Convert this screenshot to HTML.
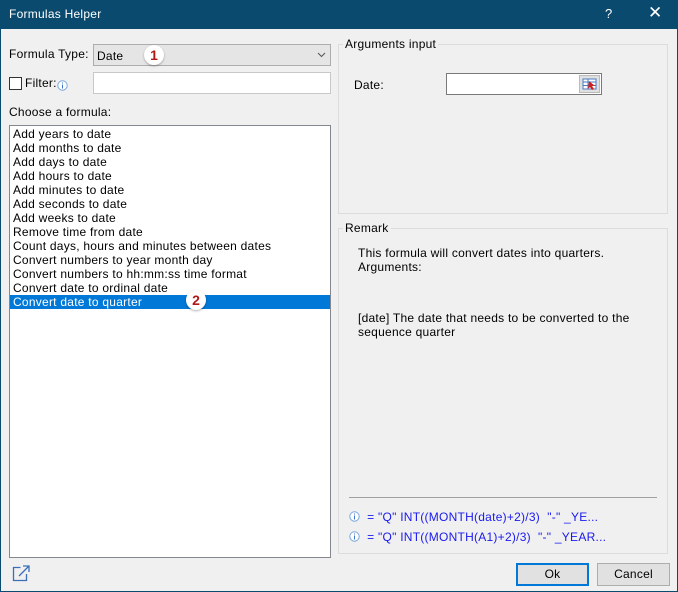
<!DOCTYPE html>
<html><head><meta charset="utf-8"><style>
*{box-sizing:border-box;margin:0;padding:0}
body{width:678px;height:592px;background:#f0f0f0;font-family:"Liberation Sans",sans-serif;font-size:12px;letter-spacing:0.25px;color:#000;position:relative;overflow:hidden}
.win{position:absolute;left:0;top:0;width:678px;height:592px;border:1px solid #0b4a6f;border-top:none}
.title{position:absolute;left:0;top:0;width:678px;height:29px;background:#0b4a6f;color:#fff;font-size:12px}
.abs{position:absolute}
.badge{position:absolute;width:20px;height:20px;border-radius:50%;background:#fff;color:#b01818;font-weight:bold;font-size:14px;text-align:center;line-height:20px;box-shadow:0 1px 2px rgba(0,0,0,.3);letter-spacing:0}
.list div{height:14px;line-height:14px;padding-left:3px;white-space:nowrap}
.blue{color:#1a1af0}
.ic{display:inline-block;vertical-align:-1px}
</style></head><body>
<div class="title">
<div class="abs" style="left:9px;top:7px">Formulas Helper</div>
<div class="abs" style="left:605px;top:6px;font-size:13px">?</div>
<div class="abs" style="left:648px;top:3px;font-size:17px">✕</div>
</div>
<div class="win"></div>

<div class="abs" style="left:9px;top:47px">Formula Type:</div>
<div class="abs" style="left:93px;top:44px;width:238px;height:22px;background:#e5e5e5;border:1px solid #adadad"></div>
<div class="abs" style="left:97px;top:49px">Date</div>
<svg class="abs" style="left:317px;top:52px" width="9" height="6" viewBox="0 0 9 6"><path d="M1 1l3.5 3.5L8 1" fill="none" stroke="#555" stroke-width="1"/></svg>
<div class="badge" style="left:144px;top:45px">1</div>

<div class="abs" style="left:9px;top:77px;width:13px;height:13px;border:1px solid #333;background:#fff"></div>
<div class="abs" style="left:25px;top:76px">Filter:</div>
<svg class="abs" style="left:57px;top:80px" width="11" height="11" viewBox="0 0 11 11"><circle cx="5.5" cy="5.5" r="4.7" fill="#fff" stroke="#7aa6dc"/><rect x="5" y="2.5" width="1" height="1" fill="#3c78c8"/><rect x="5" y="4.5" width="1" height="4" fill="#3c78c8"/></svg>
<div class="abs" style="left:93px;top:72px;width:238px;height:22px;background:#fff;border:1px solid #c8c8c8"></div>

<div class="abs" style="left:9px;top:105px">Choose a formula:</div>
<div class="abs list" style="left:9px;top:125px;width:322px;height:433px;background:#fff;border:1px solid #828790;padding-top:1px">
<div>Add years to date</div><div>Add months to date</div><div>Add days to date</div><div>Add hours to date</div><div>Add minutes to date</div><div>Add seconds to date</div><div>Add weeks to date</div><div>Remove time from date</div><div>Count days, hours and minutes between dates</div><div>Convert numbers to year month day</div><div>Convert numbers to hh:mm:ss time format</div><div>Convert date to ordinal date</div><div style="background:#0078d7;color:#fff">Convert date to quarter</div>
</div>
<div class="badge" style="left:186px;top:290px">2</div>

<div class="abs" style="left:338px;top:44px;width:330px;height:170px;border:1px solid #dcdcdc"></div>
<div class="abs" style="left:343px;top:37px;background:#f0f0f0;padding:0 2px">Arguments input</div>
<div class="abs" style="left:354px;top:78px">Date:</div>
<div class="abs" style="left:446px;top:73px;width:156px;height:22px;background:#fff;border:1px solid #7a7a7a"></div>
<div class="abs" style="left:579px;top:75px;width:21px;height:18px;background:#e0e0e0;border:1px solid #bbb">
<svg width="19" height="16" viewBox="0 0 19 16"><rect x="3" y="3" width="13" height="10" fill="#fff" stroke="#4a7ac0"/><line x1="3" y1="6" x2="16" y2="6" stroke="#4a7ac0"/><line x1="3" y1="9.5" x2="16" y2="9.5" stroke="#4a7ac0"/><line x1="8" y1="3" x2="8" y2="13" stroke="#4a7ac0"/><path d="M9 5l6 5-3 0 2 3-2 1-2-3-2 2z" fill="#d02020"/></svg></div>

<div class="abs" style="left:338px;top:228px;width:330px;height:326px;border:1px solid #dcdcdc"></div>
<div class="abs" style="left:343px;top:221px;background:#f0f0f0;padding:0 2px">Remark</div>
<div class="abs" style="left:358px;top:246px;line-height:14px">This formula will convert dates into quarters.<br>Arguments:</div>
<div class="abs" style="left:358px;top:311px;line-height:14px">[date] The date that needs to be converted to the<br>sequence quarter</div>
<div class="abs" style="left:349px;top:497px;width:308px;height:1px;background:#a0a0a0"></div>
<div class="abs blue" style="left:349px;top:510px"><svg class="ic" width="11" height="11" viewBox="0 0 11 11"><circle cx="5.5" cy="5.5" r="4.7" fill="#fff" stroke="#7aa6dc"/><rect x="5" y="2.5" width="1" height="1" fill="#3c78c8"/><rect x="5" y="4.5" width="1" height="4" fill="#3c78c8"/></svg>&nbsp; = "Q" INT((MONTH(date)+2)/3) &nbsp;"-" _YE...</div>
<div class="abs blue" style="left:349px;top:530px"><svg class="ic" width="11" height="11" viewBox="0 0 11 11"><circle cx="5.5" cy="5.5" r="4.7" fill="#fff" stroke="#7aa6dc"/><rect x="5" y="2.5" width="1" height="1" fill="#3c78c8"/><rect x="5" y="4.5" width="1" height="4" fill="#3c78c8"/></svg>&nbsp; = "Q" INT((MONTH(A1)+2)/3) &nbsp;"-" _YEAR...</div>

<svg class="abs" style="left:12px;top:565px" width="19" height="17" viewBox="0 0 19 17"><path d="M8.5 2.5H1.5V15.5H14.5V9" fill="none" stroke="#3a6fb8" stroke-width="1.3"/><path d="M7 11L17 1M11 1H17V7" fill="none" stroke="#3a6fb8" stroke-width="1.3"/></svg>

<div class="abs" style="left:516px;top:563px;width:73px;height:23px;border:2px solid #0078d7;background:#e1e1e1;text-align:center;line-height:19px">Ok</div>
<div class="abs" style="left:597px;top:563px;width:73px;height:23px;border:1px solid #adadad;background:#e1e1e1;text-align:center;line-height:21px">Cancel</div>
</body></html>
